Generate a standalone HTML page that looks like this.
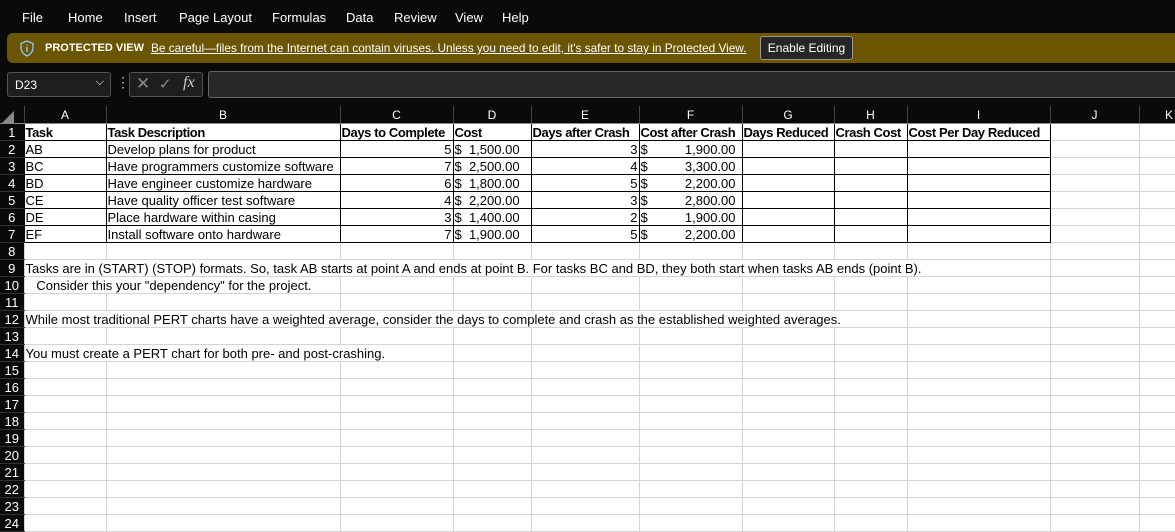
<!DOCTYPE html>
<html><head><meta charset="utf-8"><style>
*{margin:0;padding:0;box-sizing:border-box}
body{width:1175px;height:527px;overflow:hidden;background:#0a0a0a;font-family:"Segoe UI","Liberation Sans",sans-serif;position:relative}
.menu{position:absolute;top:0;left:0;height:33px;color:#fff;font-size:13px}
.menu span{position:absolute;top:10px;white-space:nowrap}
.banner{position:absolute;top:33px;left:7px;width:1168px;height:30px;background:#6b5500;border-radius:6px 0 0 6px;color:#fff;font-size:11.8px}
.banner .t{position:absolute;top:8px;white-space:nowrap}
.btn{position:absolute;left:753px;top:3px;width:93px;height:24px;background:#262626;border:1px solid #9a9a9a;border-radius:3px;color:#fff;font-size:12px;text-align:center;line-height:22px}
.nb{position:absolute;left:7px;top:72px;width:104px;height:25px;border:1px solid #555;border-radius:3px;background:#1e1e1e;color:#fff;font-size:12px;padding:5px 0 0 7px}
.fx{position:absolute;left:129px;top:72px;width:74px;height:25px;border:1px solid #555;border-radius:3px;background:#1e1e1e;color:#888}
.fbar{position:absolute;left:208px;top:71px;width:967px;height:27px;background:#282828;border-top:1px solid #666;border-bottom:1px solid #666;border-left:1px solid #666;border-radius:3px 0 0 3px}
table{position:absolute;top:106px;left:0;width:1199px;border-collapse:collapse;table-layout:fixed;font-family:"Liberation Sans",Arial,sans-serif;font-size:13px}
td{height:17px;border:1px solid #d4d4d4;background:#fff;color:#000;white-space:nowrap;overflow:visible;padding:0 1px;line-height:15px;vertical-align:bottom}
tr.h td{background:#0a0a0a;color:#fff;text-align:center;border:none;border-right:1px solid #444;border-bottom:1px solid #888;font-size:12px}
td.rh{background:#0a0a0a;color:#fff;border:none;border-bottom:1px solid #333;text-align:center;padding:0;font-size:13px}
td.b{border:1px solid #000}
.r{text-align:right}
.bold td.b{font-weight:bold;letter-spacing:-0.4px}
</style></head><body>
<div class="menu">
<span style="left:22px">File</span><span style="left:68px">Home</span><span style="left:124px">Insert</span><span style="left:179px">Page Layout</span><span style="left:272px">Formulas</span><span style="left:346px">Data</span><span style="left:394px">Review</span><span style="left:455px">View</span><span style="left:502px">Help</span>
</div>
<div class="banner">
<svg style="position:absolute;left:12px;top:7px" width="16" height="17" viewBox="0 0 16 17"><path d="M8 1 L14 3.5 V8 C14 12 11 14.5 8 16 C5 14.5 2 12 2 8 V3.5 Z" fill="none" stroke="#8fc8ff" stroke-width="1.3"/><path d="M8 7v5M8 4.6v1" stroke="#8fc8ff" stroke-width="1.4"/></svg>
<span class="t" style="left:38px;font-weight:bold;font-size:11px;top:9px">PROTECTED VIEW</span>
<span class="t" style="left:144px;text-decoration:underline">Be careful—files from the Internet can contain viruses. Unless you need to edit, it's safer to stay in Protected View.</span>
<div class="btn">Enable Editing</div>
</div>
<div class="nb">D23<span style="position:absolute;right:6px;top:3px;font-size:11px">⌵</span></div>
<div style="position:absolute;left:116px;top:74px;color:#ccc;font-size:14px">⋮</div>
<div class="fx"><span style="position:absolute;left:6px;top:1px;font-size:17px">✕</span><span style="position:absolute;left:29px;top:2px;font-size:15px">✓</span><span style="position:absolute;left:53px;top:1px;font-size:16px;font-style:italic;font-family:'Liberation Serif',serif;color:#ccc">fx</span></div>
<div class="fbar"></div>
<table>
<colgroup><col style="width:24px"><col style="width:82px"><col style="width:234px"><col style="width:113px"><col style="width:78px"><col style="width:108px"><col style="width:103px"><col style="width:92px"><col style="width:73px"><col style="width:143px"><col style="width:89px"><col style="width:60px"></colgroup>
<tr class="h"><td><svg width="14" height="12" style="display:block;margin-top:3px"><path d="M13 0V12H1Z" fill="#888"/></svg></td><td>A</td><td>B</td><td>C</td><td>D</td><td>E</td><td>F</td><td>G</td><td>H</td><td>I</td><td>J</td><td>K</td></tr>
<tr class="bold"><td class="rh">1</td><td class="b">Task</td><td class="b">Task Description</td><td class="b">Days to Complete</td><td class="b">Cost</td><td class="b">Days after Crash</td><td class="b">Cost after Crash</td><td class="b">Days Reduced</td><td class="b">Crash Cost</td><td class="b">Cost Per Day Reduced</td><td></td><td></td></tr>
<tr><td class="rh">2</td><td class="b">AB</td><td class="b">Develop plans for product</td><td class="b r">5</td><td class="b">$&nbsp;&nbsp;1,500.00</td><td class="b r">3</td><td class="b">$<span style="float:right;padding-right:5px">1,900.00</span></td><td class="b"></td><td class="b"></td><td class="b"></td><td></td><td></td></tr>
<tr><td class="rh">3</td><td class="b">BC</td><td class="b">Have programmers customize software</td><td class="b r">7</td><td class="b">$&nbsp;&nbsp;2,500.00</td><td class="b r">4</td><td class="b">$<span style="float:right;padding-right:5px">3,300.00</span></td><td class="b"></td><td class="b"></td><td class="b"></td><td></td><td></td></tr>
<tr><td class="rh">4</td><td class="b">BD</td><td class="b">Have engineer customize hardware</td><td class="b r">6</td><td class="b">$&nbsp;&nbsp;1,800.00</td><td class="b r">5</td><td class="b">$<span style="float:right;padding-right:5px">2,200.00</span></td><td class="b"></td><td class="b"></td><td class="b"></td><td></td><td></td></tr>
<tr><td class="rh">5</td><td class="b">CE</td><td class="b">Have quality officer test software</td><td class="b r">4</td><td class="b">$&nbsp;&nbsp;2,200.00</td><td class="b r">3</td><td class="b">$<span style="float:right;padding-right:5px">2,800.00</span></td><td class="b"></td><td class="b"></td><td class="b"></td><td></td><td></td></tr>
<tr><td class="rh">6</td><td class="b">DE</td><td class="b">Place hardware within casing</td><td class="b r">3</td><td class="b">$&nbsp;&nbsp;1,400.00</td><td class="b r">2</td><td class="b">$<span style="float:right;padding-right:5px">1,900.00</span></td><td class="b"></td><td class="b"></td><td class="b"></td><td></td><td></td></tr>
<tr><td class="rh">7</td><td class="b">EF</td><td class="b">Install software onto hardware</td><td class="b r">7</td><td class="b">$&nbsp;&nbsp;1,900.00</td><td class="b r">5</td><td class="b">$<span style="float:right;padding-right:5px">2,200.00</span></td><td class="b"></td><td class="b"></td><td class="b"></td><td></td><td></td></tr>
<tr><td class="rh">8</td><td></td><td></td><td></td><td></td><td></td><td></td><td></td><td></td><td></td><td></td><td></td></tr>
<tr><td class="rh">9</td><td colspan="9">Tasks are in (START) (STOP) formats. So, task AB starts at point A and ends at point B. For tasks BC and BD, they both start when tasks AB ends (point B).</td><td></td><td></td></tr>
<tr><td class="rh">10</td><td colspan="2">&nbsp;&nbsp;&nbsp;Consider this your "dependency" for the project.</td><td></td><td></td><td></td><td></td><td></td><td></td><td></td><td></td><td></td></tr>
<tr><td class="rh">11</td><td></td><td></td><td></td><td></td><td></td><td></td><td></td><td></td><td></td><td></td><td></td></tr>
<tr><td class="rh">12</td><td colspan="8">While most traditional PERT charts have a weighted average, consider the days to complete and crash as the established weighted averages.</td><td></td><td></td><td></td></tr>
<tr><td class="rh">13</td><td></td><td></td><td></td><td></td><td></td><td></td><td></td><td></td><td></td><td></td><td></td></tr>
<tr><td class="rh">14</td><td colspan="3">You must create a PERT chart for both pre- and post-crashing.</td><td></td><td></td><td></td><td></td><td></td><td></td><td></td><td></td></tr>
<tr><td class="rh">15</td><td></td><td></td><td></td><td></td><td></td><td></td><td></td><td></td><td></td><td></td><td></td></tr>
<tr><td class="rh">16</td><td></td><td></td><td></td><td></td><td></td><td></td><td></td><td></td><td></td><td></td><td></td></tr>
<tr><td class="rh">17</td><td></td><td></td><td></td><td></td><td></td><td></td><td></td><td></td><td></td><td></td><td></td></tr>
<tr><td class="rh">18</td><td></td><td></td><td></td><td></td><td></td><td></td><td></td><td></td><td></td><td></td><td></td></tr>
<tr><td class="rh">19</td><td></td><td></td><td></td><td></td><td></td><td></td><td></td><td></td><td></td><td></td><td></td></tr>
<tr><td class="rh">20</td><td></td><td></td><td></td><td></td><td></td><td></td><td></td><td></td><td></td><td></td><td></td></tr>
<tr><td class="rh">21</td><td></td><td></td><td></td><td></td><td></td><td></td><td></td><td></td><td></td><td></td><td></td></tr>
<tr><td class="rh">22</td><td></td><td></td><td></td><td></td><td></td><td></td><td></td><td></td><td></td><td></td><td></td></tr>
<tr><td class="rh">23</td><td></td><td></td><td></td><td></td><td></td><td></td><td></td><td></td><td></td><td></td><td></td></tr>
<tr><td class="rh">24</td><td></td><td></td><td></td><td></td><td></td><td></td><td></td><td></td><td></td><td></td><td></td></tr>
</table>
</body></html>
